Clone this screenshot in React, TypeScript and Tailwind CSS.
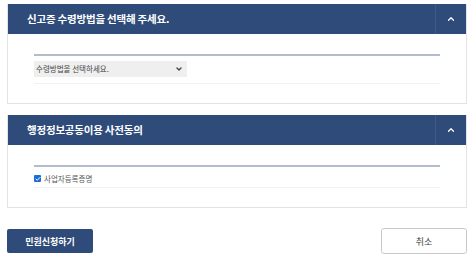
import { ChevronUp, ChevronDown, Check } from 'lucide-react';

const font = { fontFamily: '"Noto Sans CJK KR", "Noto Sans", sans-serif' };

const PanelHeader = ({ title }: { title: string }) => (
  <div className="flex h-[30px] items-center bg-[#2f4b7a] text-white">
    <h2 className="flex-1 pl-[19px] text-[10.5px] font-bold tracking-[-0.2px]">{title}</h2>
    <div className="flex h-full w-[31px] items-center justify-center border-l border-[#3f5987]">
      <ChevronUp className="h-[10px] w-[10px]" strokeWidth={3} />
    </div>
  </div>
);

export default function App() {
  return (
    <div className="h-[266px] w-[474px] bg-white px-[7px] pt-[4px] text-[#333]" style={font}>
      <section className="border border-[#e3e3e3] border-t-0">
        <PanelHeader title="신고증 수령방법을 선택해 주세요." />
        <div className="px-[26px] pt-[20px] pb-[19px]">
          <div className="border-t-2 border-[#b3bccb]" />
          <div className="border-b border-[#f2f2f2] pt-[5px] pb-[6px]">
            <div className="flex h-[16px] w-[153px] items-center justify-between bg-[#efefef] pl-[2px] pr-[4px] text-[7.5px] text-[#444]">
              <span>수령방법을 선택하세요.</span>
              <ChevronDown className="h-[8px] w-[8px]" strokeWidth={4} />
            </div>
          </div>
        </div>
      </section>

      <section className="mt-[11px] border border-[#e3e3e3] border-t-0">
        <PanelHeader title="행정정보공동이용 사전동의" />
        <div className="px-[26px] pt-[20px] pb-[19px]">
          <div className="border-t-2 border-[#b3bccb]" />
          <div className="flex items-center gap-[3px] border-b border-[#f2f2f2] pt-[6px] pb-[3px] text-[7.5px] text-[#555]">
            <span className="flex h-[7px] w-[7px] items-center justify-center rounded-[1px] bg-[#1a6fd6]">
              <Check className="h-[6px] w-[6px] text-white" strokeWidth={4} />
            </span>
            <span>사업자등록증명</span>
          </div>
        </div>
      </section>

      <div className="mt-[20px] flex items-center justify-between">
        <button className="h-[24px] w-[86px] rounded-[2px] bg-[#2f4b7a] text-[9px] font-bold text-white">
          민원신청하기
        </button>
        <button className="h-[26px] w-[86px] rounded-[3px] border border-[#c9c9c9] bg-white text-[9px] text-[#444]">
          취소
        </button>
      </div>
    </div>
  );
}
